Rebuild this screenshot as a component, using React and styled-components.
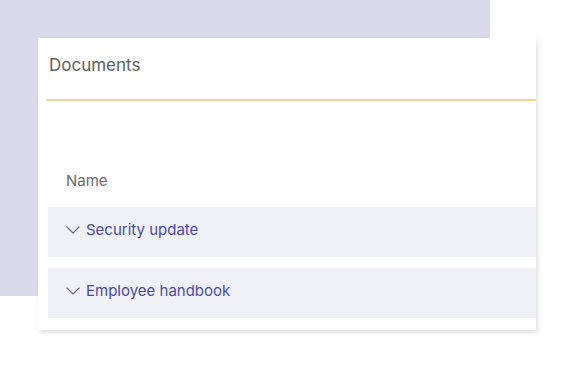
import React from "react";
import styled, { createGlobalStyle } from "styled-components";

const Global = createGlobalStyle`
  html, body { margin: 0; padding: 0; background: #ffffff; }
  body { font-family: Inter, "Noto Sans", sans-serif; }
`;

const Stage = styled.div`
  position: relative;
  width: 575px;
  height: 368px;
  overflow: hidden;
  padding: 38px 0 0 38px;
  box-sizing: border-box;
`;

const Backdrop = styled.div`
  position: absolute;
  left: 0;
  top: 0;
  width: 490px;
  height: 296px;
  background: #d9d9eb;
`;

const Card = styled.section`
  position: relative;
  width: 498px;
  height: 292px;
  box-sizing: border-box;
  background: #ffffff;
  padding: 0 0 0 8px;
  box-shadow: 2px 3px 5px rgba(0, 0, 0, 0.12);
  display: flex;
  flex-direction: column;
`;

const Header = styled.header`
  display: flex;
  align-items: center;
  padding: 0 0 8px 3px;
  box-sizing: border-box;
  border-bottom: 2px solid #f6d293;
  height: 63px;
`;

const Title = styled.h2`
  margin: 0;
  font-size: 17px;
  font-weight: 400;
  color: #5e5e5e;
`;

const Table = styled.div`
  display: flex;
  flex-direction: column;
  gap: 11px;
  padding: 68px 0 0 2px;
`;

const ColumnHead = styled.div`
  font-size: 15px;
  color: #6a6a6a;
  padding-left: 18px;
  height: 23px;
  line-height: 23px;
  margin-bottom: 4px;
`;

const Row = styled.div`
  height: 50px;
  box-sizing: border-box;
  background: #f0f1f7;
  display: flex;
  align-items: center;
  gap: 6px;
  padding: 0 0 5px 18px;
  color: #4a4aa6;
  font-size: 15px;
`;

const Chevron = () => (
  <svg width="14" height="8" viewBox="0 0 14 8" fill="none">
    <path d="M1 1l6 6 6-6" stroke="#6b6b8a" strokeWidth="1.2" strokeLinecap="round" strokeLinejoin="round" />
  </svg>
);

export default function App() {
  return (
    <>
      <Global />
      <Stage>
        <Backdrop />
        <Card>
          <Header>
            <Title>Documents</Title>
          </Header>
          <Table>
            <ColumnHead>Name</ColumnHead>
            <Row><Chevron />Security update</Row>
            <Row><Chevron />Employee handbook</Row>
          </Table>
        </Card>
      </Stage>
    </>
  );
}
